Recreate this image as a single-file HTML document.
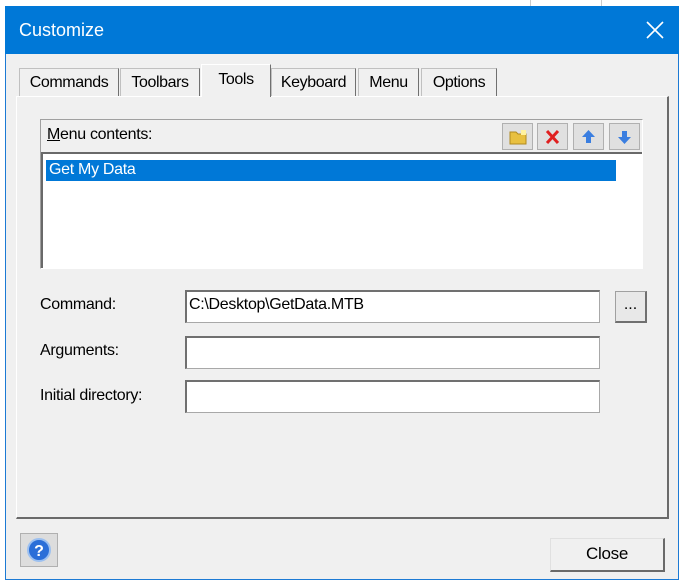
<!DOCTYPE html>
<html><head><style>
body{margin:0;width:684px;height:584px;background:#fff;position:relative;overflow:hidden;font-family:"Liberation Sans",sans-serif;font-size:16px;color:#000}
.a{position:absolute}
.dlg{left:5px;top:6px;width:674px;height:574px;background:#f0f0f0;border:1px solid #1c7ad4;box-sizing:border-box}
.title{left:5px;top:6px;width:674px;height:48px;background:#0078d7;color:#fff;font-size:18px}
.tab{top:68px;height:28px;border:1px solid #c0c0c0;border-bottom:none;border-right:1px solid #707070;background:#f0f0f0;box-sizing:border-box;text-align:center;line-height:27px;font-size:16px;letter-spacing:-0.4px}
.panel{left:16px;top:96px;width:653px;height:423px;border:1px solid #fff;border-right:2px solid #6a6a6a;border-bottom:2px solid #6a6a6a;box-sizing:border-box}
.tb{width:31px;height:27px;border:1px solid #b0b0b0;background:#e0e0e0;box-sizing:border-box;top:123px}
.in{left:185px;width:415px;height:33px;border:1px solid #a8a8a8;border-top:2px solid #707070;border-left:2px solid #707070;background:#fff;box-sizing:border-box}
.lbl{left:40px;font-size:16px;letter-spacing:-0.3px}
</style></head><body>
<div class="a" style="left:530px;top:0;width:70px;height:6px;border-left:1px solid #ccc;border-right:1px solid #ccc"></div>
<div class="a dlg"></div>
<div class="a title"><span class="a" style="left:14px;top:14px">Customize</span>
<svg class="a" style="left:641px;top:15px" width="18" height="18"><path d="M1 1L17 17M17 1L1 17" stroke="#fff" stroke-width="1.6"/></svg></div>
<div class="a panel"></div>
<div class="a tab" style="left:19px;width:100px">Commands</div>
<div class="a tab" style="left:120px;width:80px">Toolbars</div>
<div class="a tab" style="left:201px;top:64px;height:33px;width:70px;border-bottom:none;line-height:30px;border-top:1px solid #fff;border-left:1px solid #fff">Tools</div>
<div class="a tab" style="left:271px;width:85px">Keyboard</div>
<div class="a tab" style="left:358px;width:61px">Menu</div>
<div class="a tab" style="left:421px;width:76px">Options</div>
<div class="a" style="left:40px;top:119px;width:603px;height:150px;border:1px solid #a0a0a0;border-bottom:1px solid #fff;border-right:1px solid #fff;box-sizing:border-box"></div>
<span class="a" style="left:47px;top:126px;letter-spacing:-0.3px"><u>M</u>enu contents:</span>
<div class="a tb" style="left:502px"><svg width="29" height="25"><path d="M7 8h6l2 2h8v10H7z" fill="#e8c040" stroke="#b08a20"/><rect x="18" y="6" width="5" height="5" fill="#fff2a0"/></svg></div>
<div class="a tb" style="left:537px"><svg width="29" height="25"><path d="M9 7L20 19M20 7L9 19" stroke="#e02020" stroke-width="3"/></svg></div>
<div class="a tb" style="left:573px"><svg width="29" height="25"><path d="M14.5 6L21 13h-4v6h-5v-6H8z" fill="#3a7ee0"/></svg></div>
<div class="a tb" style="left:609px"><svg width="29" height="25"><path d="M14.5 20L21 13h-4V7h-5v6H8z" fill="#3a7ee0"/></svg></div>
<div class="a" style="left:41px;top:152px;width:601px;height:116px;background:#fff;border-top:2px solid #696969;border-left:2px solid #696969;box-sizing:border-box"></div>
<div class="a" style="left:46px;top:160px;width:570px;height:21px;background:#0078d7;color:#fff;line-height:20px;padding-left:3px;box-sizing:border-box;letter-spacing:-0.3px">Get My Data</div>
<span class="a lbl" style="top:296px">Command:</span>
<div class="a in" style="top:290px"><span class="a" style="left:2px;top:4px;letter-spacing:-0.3px">C:\Desktop\GetData.MTB</span></div>
<div class="a" style="left:615px;top:291px;width:32px;height:32px;border:1px solid #a0a0a0;border-right:2px solid #707070;border-bottom:2px solid #707070;background:#e8e8e8;box-sizing:border-box;text-align:center;line-height:26px">...</div>
<span class="a lbl" style="top:342px">Arguments:</span>
<div class="a in" style="top:336px"></div>
<span class="a lbl" style="top:387px">Initial directory:</span>
<div class="a in" style="top:380px"></div>
<div class="a" style="left:20px;top:533px;width:38px;height:34px;border:1px solid #b0b0b0;background:#ddd;box-sizing:border-box"><svg width="36" height="32"><circle cx="18" cy="16" r="11" fill="#2a6ed8" stroke="#9cc0f0" stroke-width="2"/><text x="18" y="22" font-size="16" font-weight="bold" fill="#fff" text-anchor="middle" font-family="Liberation Sans">?</text></svg></div>
<div class="a" style="left:550px;top:538px;width:115px;height:34px;border:1px solid #e0e0e0;border-right:2px solid #6a6a6a;border-bottom:2px solid #6a6a6a;background:#f0f0f0;box-sizing:border-box;text-align:center;line-height:30px;font-size:17px;letter-spacing:-0.3px">Close</div>
</body></html>
